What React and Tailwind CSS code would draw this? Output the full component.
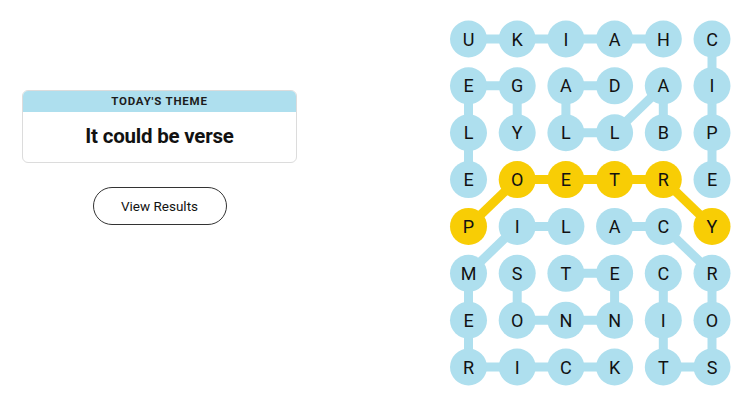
import React from 'react';

const LETTERS = [
  'UKIAHC',
  'EGADAI',
  'LYLLBP',
  'EOETRE',
  'PILACY',
  'MSTECR',
  'EONNIO',
  'RICKTS',
];

const SPANGRAM = [
  [4, 0],
  [3, 1],
  [3, 2],
  [3, 3],
  [3, 4],
  [4, 5],
];

// found words, each as a path of [row, col]
const WORDS = [
  [[0, 4], [0, 3], [0, 2], [0, 1], [0, 0]], // HAIKU
  [[3, 5], [2, 5], [1, 5], [0, 5]], // EPIC
  [[3, 0], [2, 0], [1, 0], [1, 1], [2, 1]], // ELEGY
  [[2, 4], [1, 4], [2, 3], [2, 2], [1, 2], [1, 3]], // BALLAD
  [[4, 2], [4, 1], [5, 0], [6, 0], [7, 0], [7, 1], [7, 2], [7, 3]], // LIMERICK
  [[4, 3], [4, 4], [5, 5], [6, 5], [7, 5], [7, 4], [6, 4], [5, 4]], // ACROSTIC
  [[5, 1], [6, 1], [6, 2], [6, 3], [5, 3], [5, 2]], // SONNET
];

const BLUE = '#aedfee';
const YELLOW = '#f8cd05';

const cx = (c) => 20.5 + c * 48.7;
const cy = (r) => 20 + r * 46.86;

const isSpangram = (r, c) => SPANGRAM.some(([a, b]) => a === r && b === c);

const Path = ({ cells, color }) => (
  <>
    {cells.slice(1).map(([r, c], i) => {
      const [pr, pc] = cells[i];
      return (
        <line
          key={i}
          x1={cx(pc)}
          y1={cy(pr)}
          x2={cx(c)}
          y2={cy(r)}
          stroke={color}
          strokeWidth="9"
        />
      );
    })}
  </>
);

const Board = () => (
  <svg width="284" height="372" viewBox="0 0 284 372">
    {WORDS.map((w, i) => (
      <Path key={i} cells={w} color={BLUE} />
    ))}
    <Path cells={SPANGRAM} color={YELLOW} />
    {LETTERS.map((row, r) =>
      row.split('').map((ch, c) => (
        <g key={`${r}-${c}`}>
          <circle cx={cx(c)} cy={cy(r)} r="18.5" fill={isSpangram(r, c) ? YELLOW : BLUE} />
          <text
            x={cx(c)}
            y={cy(r) + 6.5}
            textAnchor="middle"
            fontSize="18"
            fill="#121212"
            style={{ fontFamily: 'Roboto, "Liberation Sans", sans-serif' }}
          >
            {ch}
          </text>
        </g>
      )),
    )}
  </svg>
);

export default function App() {
  return (
    <div className="flex h-[402px] w-[750px] bg-white font-['Roboto','Liberation_Sans',sans-serif] text-[#121212]">
      <div className="flex w-[320px] flex-col items-center pl-[22px] pr-[23px] pt-[90px]">
        <div className="w-full overflow-hidden rounded-[6px] border border-[#dcdcdc] bg-white">
          <div className="flex h-[21px] items-center justify-center bg-[#aedfee] text-[11.5px] font-bold uppercase tracking-[0.07em] text-[#1c1c1c]">
            Today's Theme
          </div>
          <div className="flex h-[50px] items-center justify-center pb-[1px] text-[20.5px] font-bold tracking-[-0.01em]">
            It could be verse
          </div>
        </div>
        <button className="mt-[24px] h-[38px] w-[134px] rounded-full border border-[#333] bg-white text-[13.5px] text-[#121212]">
          View Results
        </button>
      </div>
      <div className="ml-[128px] pt-[19px]">
        <Board />
      </div>
    </div>
  );
}
